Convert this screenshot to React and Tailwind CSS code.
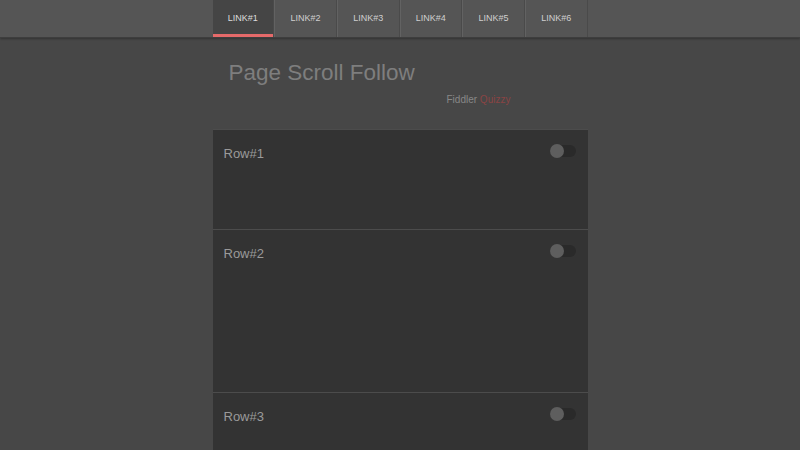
export default function App() {
    const links = ["LINK#1", "LINK#2", "LINK#3", "LINK#4", "LINK#5", "LINK#6"];
    const rows = [
        { name: "Row#1", h: "h-[100px]" },
        { name: "Row#2", h: "h-[163px]" },
        { name: "Row#3", h: "h-[120px]" },
    ];
    return (
        <div className="w-[800px] h-[450px] overflow-hidden bg-[#474747] font-['Liberation_Sans',Arial,sans-serif]">
            <div className="h-[38px] bg-[#555555] border-b border-[#3e3e3e] shadow-[0_1px_2px_rgba(0,0,0,0.3)]">
                <div className="w-[375px] mx-auto flex h-full">
                    {links.map((l, i) => (
                        <div
                            key={l}
                            className={
                                i === 0
                                    ? "relative flex-1 flex items-center justify-center text-[9px] text-[#dddddd] bg-[#454545] border-r border-[#4a4a4a]"
                                    : "relative flex-1 flex items-center justify-center text-[9px] text-[#cfcfcf] border-l border-[#626262] border-r border-r-[#4a4a4a]"
                            }
                        >
                            {l}
                            {i === 0 && (
                                <div className="absolute left-0 right-0 bottom-0 h-[3px] bg-[#e56a6a]" />
                            )}
                        </div>
                    ))}
                </div>
            </div>
            <div className="w-[375px] mx-auto">
                <div className="h-[91px] pt-[22px] pl-[16px]">
                    <h1 className="text-[22.5px] leading-[26px] text-[#7e7e7e]">Page Scroll Follow</h1>
                    <div className="mt-[6px] pl-[218px] text-[10px] text-[#888888]">
                        Fiddler <span className="text-[#8a4444]">Quizzy</span>
                    </div>
                </div>
                {rows.map((r) => (
                    <div
                        key={r.name}
                        className={`${r.h} bg-[#333333] border-t border-[#4c4c4c] flex justify-between items-start pl-[11px] pr-[12px] pt-[14px]`}
                    >
                        <span className="text-[13px] text-[#9a9a9a]">{r.name}</span>
                        <div className="relative w-[26px] h-[12px] mt-[1px] rounded-full bg-[#2a2a2a]">
                            <div className="absolute left-0 top-[-1px] w-[14px] h-[14px] rounded-full bg-[#5e5e5e]" />
                        </div>
                    </div>
                ))}
            </div>
        </div>
    );
}
